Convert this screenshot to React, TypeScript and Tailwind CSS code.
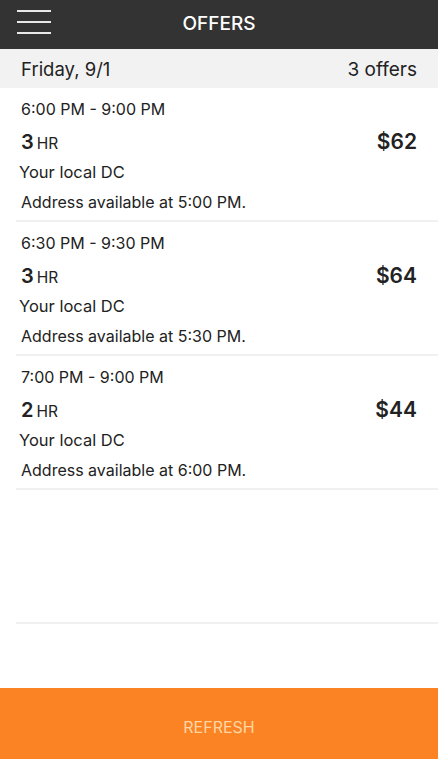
import React from "react";

const offers = [
  { time: "6:00 PM - 9:00 PM", hr: "3", price: "$62", addr: "Address available at 5:00 PM." },
  { time: "6:30 PM - 9:30 PM", hr: "3", price: "$64", addr: "Address available at 5:30 PM." },
  { time: "7:00 PM - 9:00 PM", hr: "2", price: "$44", addr: "Address available at 6:00 PM." },
];

export default function App() {
  return (
    <div className="w-[438px] h-[759px] flex flex-col bg-white text-[#222] overflow-hidden" style={{ fontFamily: 'Inter, "Liberation Sans", Arial, sans-serif' }}>
      <div className="h-[49px] bg-[#333333] flex items-center relative shrink-0">
        <div className="absolute left-[17px] top-[10px] flex flex-col gap-[9px]">
          <div className="w-[34px] h-[2px] bg-[#e8e8e8]" />
          <div className="w-[34px] h-[2px] bg-[#e8e8e8]" />
          <div className="w-[34px] h-[2px] bg-[#e8e8e8]" />
        </div>
        <div className="flex-1 text-center text-white text-[19px] font-medium">OFFERS</div>
      </div>
      <div className="h-[39px] bg-[#f2f2f2] flex items-center justify-between pl-[21px] pr-[21px] pt-[3px] text-[#222] shrink-0">
        <span className="text-[18.5px]">Friday, 9/1</span>
        <span className="text-[19px]">3 offers</span>
      </div>
      <div className="flex-1 flex flex-col">
        {offers.map((o, i) => (
          <div key={i} className="ml-4 border-b-2 border-[#f0f0f0] h-[134px] pt-[7px] pr-[21px] flex flex-col">
            <div className="h-[28px] flex items-center pl-[5px] text-[16px]">{o.time}</div>
            <div className="h-[37px] flex items-center justify-between pl-[5px]">
              <span>
                <span className="text-[20px] font-semibold">{o.hr}</span>
                <span className="text-[15.5px] ml-[3px]">HR</span>
              </span>
              <span className="text-[21px] font-semibold">{o.price}</span>
            </div>
            <div className="h-[25px] flex items-center pl-[3px] text-[16.5px]">Your local DC</div>
            <div className="h-[34px] flex items-center pl-[5px] text-[16px]">{o.addr}</div>
          </div>
        ))}
        <div className="ml-4 border-b-2 border-[#f0f0f0] h-[134px]" />
      </div>
      <div className="h-[71px] bg-[#fb8323] flex items-center justify-center pt-[6px] text-[16px] text-[#fdd6a4] shrink-0">
        REFRESH
      </div>
    </div>
  );
}
